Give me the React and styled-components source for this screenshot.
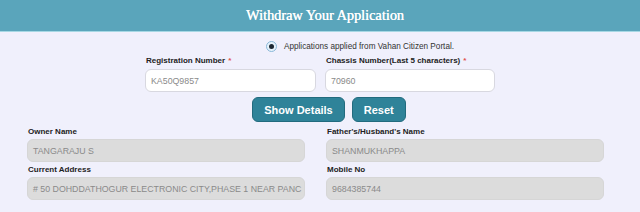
import React from "react";
import styled, { createGlobalStyle } from "styled-components";

const GlobalStyle = createGlobalStyle`
  html, body {
    margin: 0;
    padding: 0;
    background: #f0f0fc;
  }
  * {
    box-sizing: border-box;
  }
`;

const Page = styled.div`
  width: 640px;
  height: 212px;
  overflow: hidden;
  background: #f0f0fc;
  font-family: "Liberation Sans", Arial, sans-serif;
`;

const Header = styled.div`
  height: 32px;
  background: #5aa5bb;
  border-bottom: 1px solid #a6d8e4;
  display: flex;
  align-items: center;
  justify-content: center;
  padding-left: 10px;
`;

const Title = styled.h1`
  margin: 0;
  font-family: "Liberation Serif", "Times New Roman", serif;
  font-weight: normal;
  font-size: 14.3px;
  color: #ffffff;
  text-shadow: 0.25px 0 0 #fff;
`;

const SearchSection = styled.div`
  display: flex;
  flex-direction: column;
  align-items: center;
  padding-top: 9px;
`;

const RadioRow = styled.label`
  display: flex;
  align-items: center;
  gap: 7px;
  margin-left: 80px;
  font-size: 8.2px;
  color: #333;
`;

const RadioDot = styled.span`
  width: 11px;
  height: 11px;
  border-radius: 50%;
  border: 1px solid #8ab8d8;
  background: #e6f2fb;
  display: flex;
  align-items: center;
  justify-content: center;

  &::after {
    content: "";
    width: 5px;
    height: 5px;
    border-radius: 50%;
    background: #1c2733;
  }
`;

const FieldRow = styled.div`
  display: flex;
  gap: 9px;
  margin-top: 4px;
`;

const Field = styled.div`
  width: ${(p) => p.$width}px;
  display: flex;
  flex-direction: column;
`;

const Label = styled.div`
  font-size: 8px;
  font-weight: bold;
  color: #222;
  height: 10px;
  line-height: 10px;
  padding-left: 1px;
  margin-bottom: ${(p) => (p.$tight ? 2 : 3)}px;
`;

const Required = styled.span`
  color: #e05050;
  margin-left: 3px;
`;

const Input = styled.div`
  height: 23px;
  border-radius: 6px;
  border: 1px solid ${(p) => (p.$disabled ? "#d6d6d6" : "#d8d8e0")};
  background: ${(p) => (p.$disabled ? "#dcdcdc" : "#ffffff")};
  color: #8a8a8a;
  font-size: 8.8px;
  display: flex;
  align-items: center;
  padding-left: 5px;
  white-space: nowrap;
  overflow: hidden;
`;

const ButtonRow = styled.div`
  display: flex;
  gap: 7px;
  margin-top: 5px;
  margin-left: 18px;
`;

const Button = styled.button`
  height: 25px;
  padding: 0 11px;
  border-radius: 6px;
  border: 1px solid #226b7e;
  background: #2f8399;
  color: #ffffff;
  font-family: "Liberation Sans", Arial, sans-serif;
  font-weight: bold;
  font-size: 11px;
`;

const DetailGrid = styled.div`
  display: grid;
  grid-template-columns: 278px 278px;
  column-gap: 21px;
  padding-left: 27px;
  margin-top: 5px;
`;

const DetailField = styled.div`
  display: flex;
  flex-direction: column;
  margin-bottom: 3px;
`;

export default function App() {
  return (
    <Page>
      <GlobalStyle />
      <Header>
        <Title>Withdraw Your Application</Title>
      </Header>

      <SearchSection>
        <RadioRow>
          <RadioDot />
          Applications applied from Vahan Citizen Portal.
        </RadioRow>
        <FieldRow>
          <Field $width={171}>
            <Label>
              Registration Number<Required>*</Required>
            </Label>
            <Input>KA50Q9857</Input>
          </Field>
          <Field $width={170}>
            <Label>
              Chassis Number(Last 5 characters)<Required>*</Required>
            </Label>
            <Input>70960</Input>
          </Field>
        </FieldRow>
        <ButtonRow>
          <Button>Show Details</Button>
          <Button>Reset</Button>
        </ButtonRow>
      </SearchSection>

      <DetailGrid>
        <DetailField>
          <Label $tight>Owner Name</Label>
          <Input $disabled>TANGARAJU S</Input>
        </DetailField>
        <DetailField>
          <Label $tight>Father's/Husband's Name</Label>
          <Input $disabled>SHANMUKHAPPA</Input>
        </DetailField>
        <DetailField>
          <Label $tight>Current Address</Label>
          <Input $disabled># 50 DOHDDATHOGUR ELECTRONIC CITY,PHASE 1 NEAR PANC</Input>
        </DetailField>
        <DetailField>
          <Label $tight>Mobile No</Label>
          <Input $disabled>9684385744</Input>
        </DetailField>
      </DetailGrid>
    </Page>
  );
}
